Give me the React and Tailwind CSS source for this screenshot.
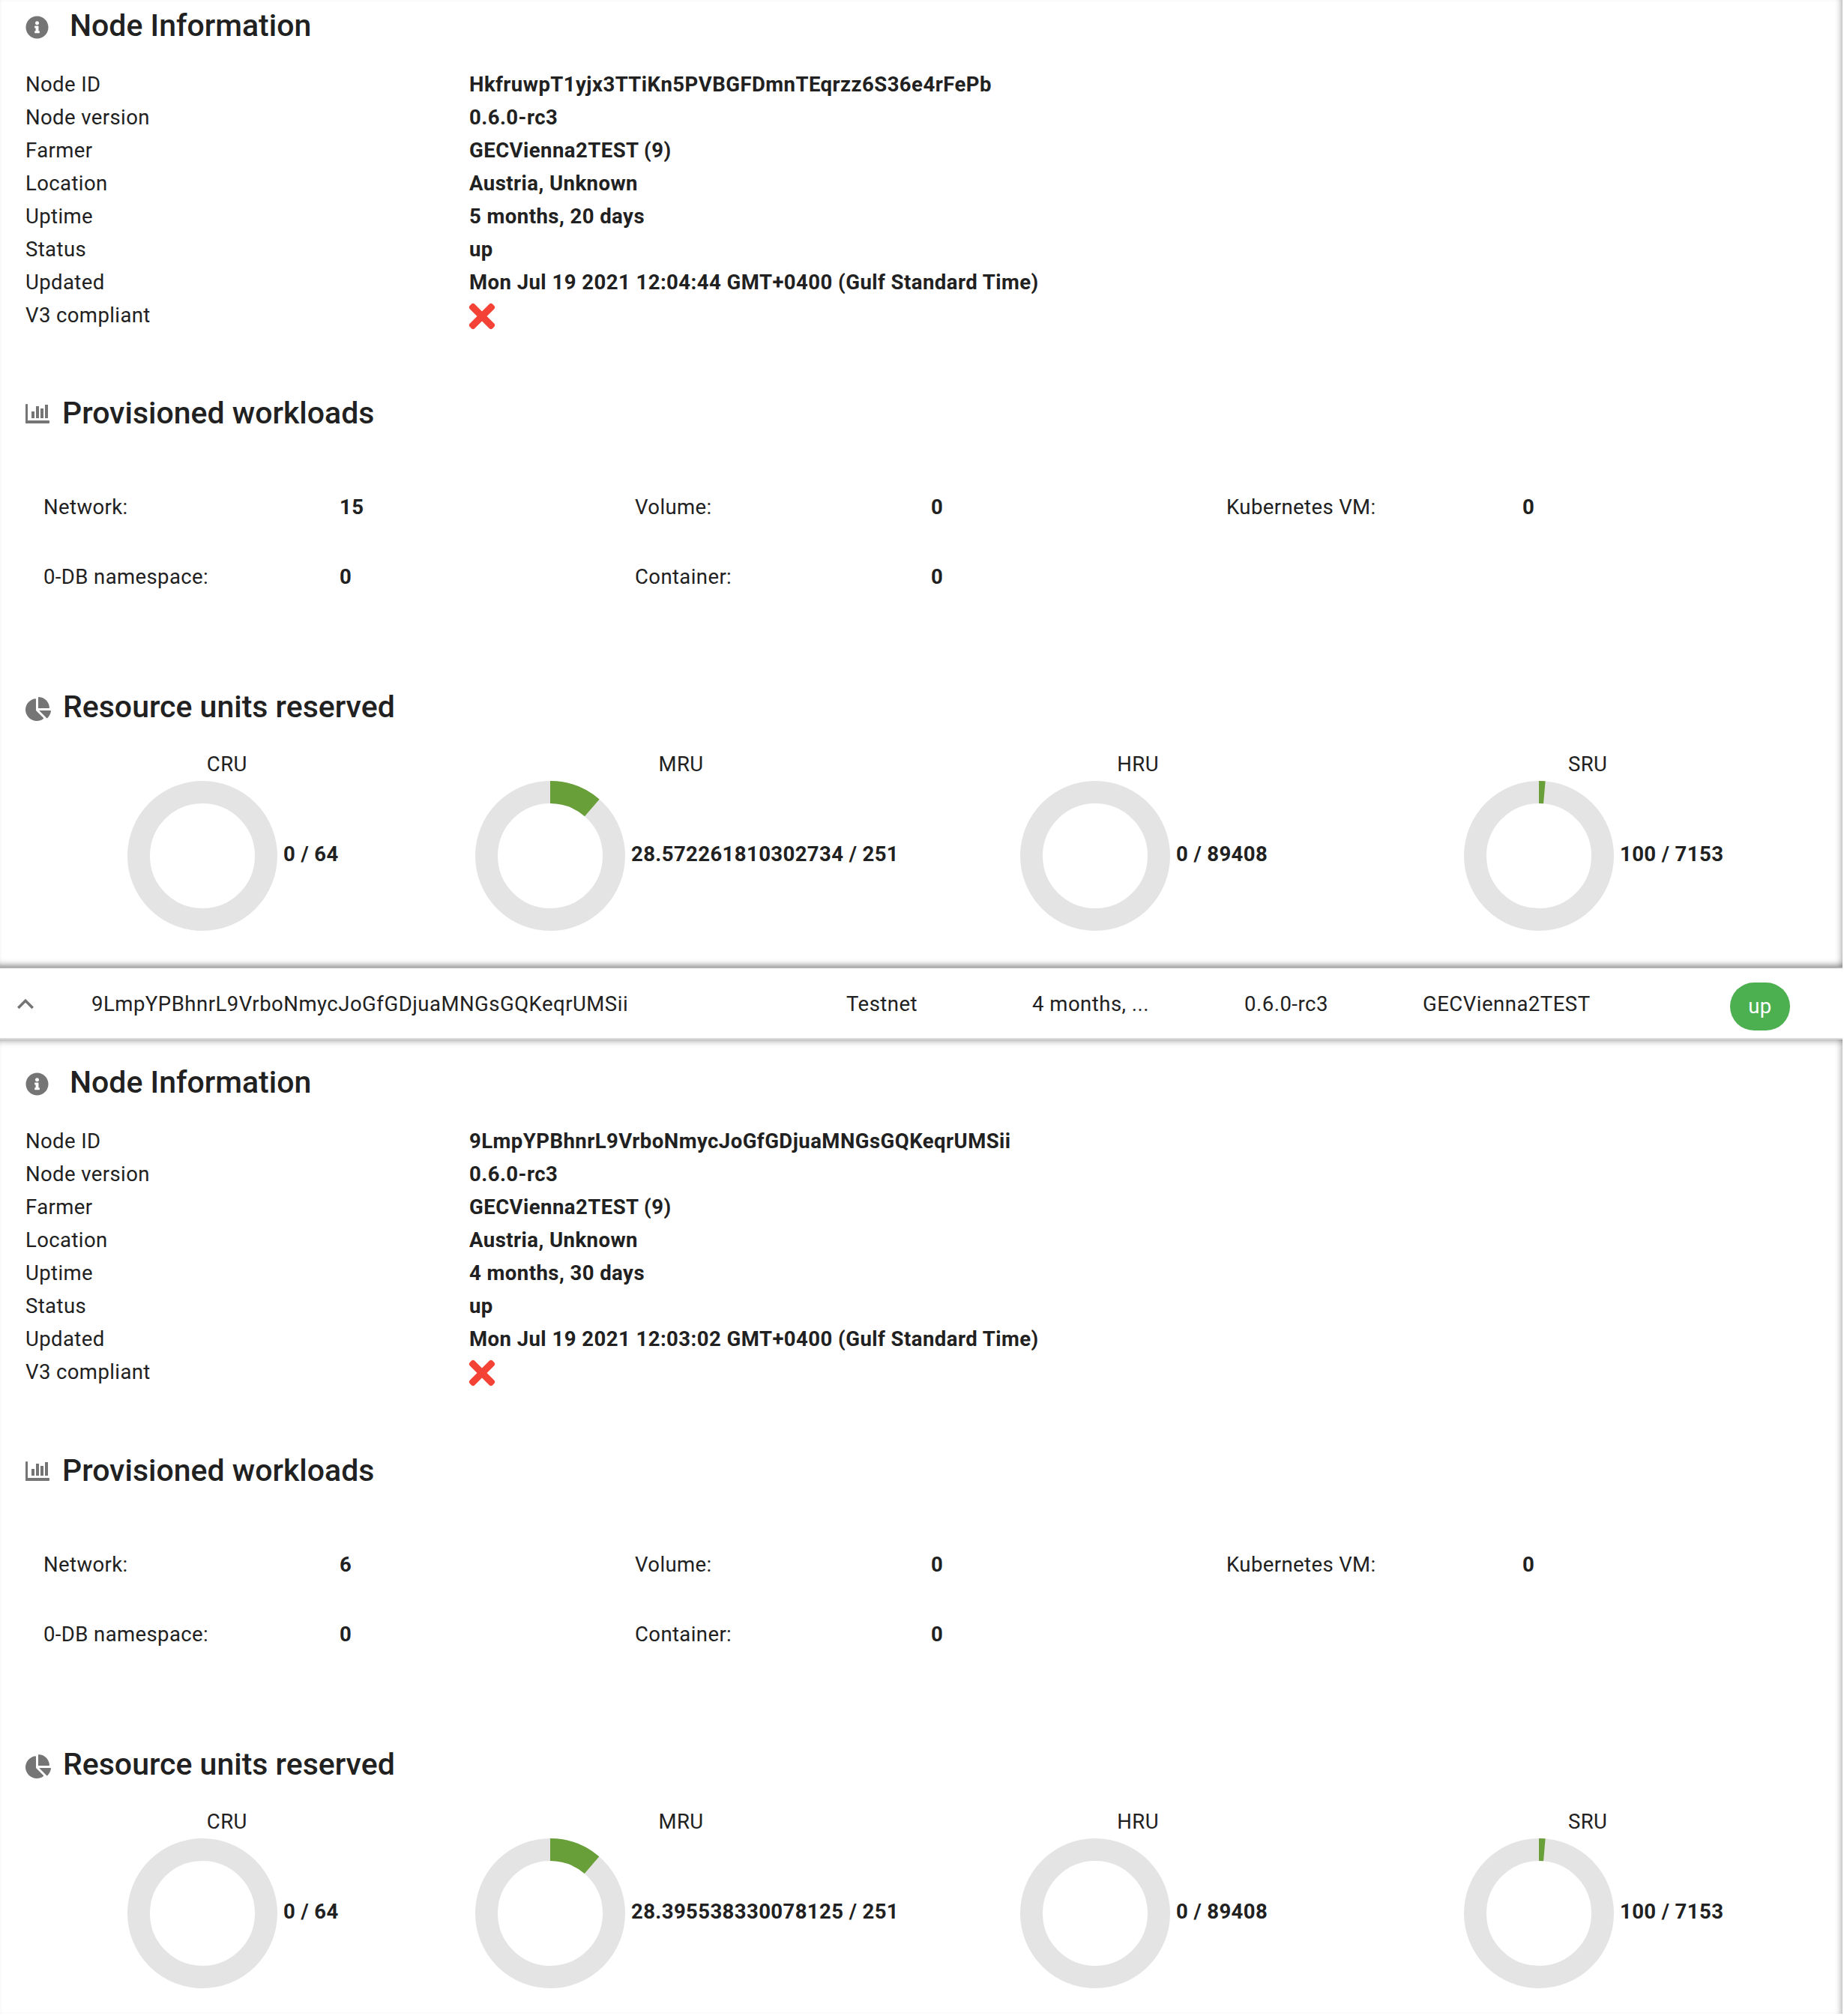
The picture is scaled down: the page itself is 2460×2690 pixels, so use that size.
import React from "react";
import { FaInfoCircle, FaChartPie, FaTimes } from "react-icons/fa";
import { MdKeyboardArrowUp } from "react-icons/md";

// Small bar chart icon, the icon pack version has heavier bars than the screenshot
const BarsIcon = () => (
  <svg width="32" height="26" viewBox="0 0 32 26" fill="#757575">
    <rect x="0" y="0" width="3" height="26" rx="1" />
    <rect x="0" y="22" width="32" height="4" rx="1" />
    <rect x="8" y="10" width="4" height="9" />
    <rect x="14" y="3" width="4" height="16" />
    <rect x="20" y="6" width="4" height="13" />
    <rect x="26" y="1" width="4" height="18" />
  </svg>
);

const Donut = ({ used, total }) => {
  const radius = 85;
  const circumference = 2 * Math.PI * radius;
  const arc = (used / total) * circumference;
  return (
    <svg width="200" height="200" viewBox="0 0 200 200" className="shrink-0">
      <circle cx="100" cy="100" r={radius} fill="none" stroke="#e4e4e4" strokeWidth="30" />
      {used > 0 && (
        <circle
          cx="100"
          cy="100"
          r={radius}
          fill="none"
          stroke="#689f38"
          strokeWidth="30"
          strokeDasharray={`${arc} ${circumference}`}
          transform="rotate(-90 100 100)"
        />
      )}
    </svg>
  );
};

const Heading = ({ icon, gap, children }) => (
  <div className="flex items-center h-[64px] pl-[34px]">
    <div className={`flex items-center shrink-0 ${gap}`}>{icon}</div>
    <h2 className="text-[41px] font-medium text-[#212121]">{children}</h2>
  </div>
);

const Section = ({ node, className, workloadsGap }) => {
  const infoRows = [
    ["Node ID", node.id],
    ["Node version", "0.6.0-rc3"],
    ["Farmer", "GECVienna2TEST (9)"],
    ["Location", "Austria, Unknown"],
    ["Uptime", node.uptime],
    ["Status", "up"],
    ["Updated", node.updated],
  ];
  const workloads = [
    ["Network:", node.network],
    ["Volume:", 0],
    ["Kubernetes VM:", 0],
    ["0-DB namespace:", 0],
    ["Container:", 0],
  ];
  const resources = [
    { name: "CRU", used: 0, total: 64, label: "0 / 64" },
    { name: "MRU", used: node.mru, total: 251, label: `${node.mru} / 251` },
    { name: "HRU", used: 0, total: 89408, label: "0 / 89408" },
    { name: "SRU", used: 100, total: 7153, label: "100 / 7153" },
  ];

  return (
    <section className={className}>
      <Heading gap="w-[59px]" icon={<FaInfoCircle size={31} color="#757575" className="mt-[3px]" />}>
        Node Information
      </Heading>

      <div className="mt-[24px] pl-[34px] text-[27.5px] tracking-[0.4px] text-[#212121]">
        {infoRows.map(([label, value]) => (
          <div key={label} className="flex items-center h-[44px]">
            <span className="w-[592px] shrink-0">{label}</span>
            <span className="font-bold tracking-[0.46px]">{value}</span>
          </div>
        ))}
        <div className="flex items-center h-[44px]">
          <span className="w-[592px] shrink-0">V3 compliant</span>
          <FaTimes size={50} color="#f44336" className="-ml-[8px] mt-[1px]" />
        </div>
      </div>

      <div className={workloadsGap}>
        <Heading gap="w-[49px]" icon={<BarsIcon />}>
          Provisioned workloads
        </Heading>
      </div>

      <div className="mt-[46px] pl-[58px] grid grid-cols-[789px_789px_1fr] text-[27.5px] tracking-[0.4px] text-[#212121]">
        {workloads.map(([label, value]) => (
          <div key={label} className="flex items-center h-[93px]">
            <span className="w-[395px] shrink-0">{label}</span>
            <span className="font-bold">{value}</span>
          </div>
        ))}
      </div>

      <div className="mt-[96px]">
        <Heading gap="w-[50px]" icon={<FaChartPie size={34} color="#757575" className="mt-[3px]" />}>
          Resource units reserved
        </Heading>
      </div>

      <div className="mt-[22px] pl-[154px] grid grid-cols-[464px_727px_592px_1fr] text-[27.5px] tracking-[0.4px] text-[#212121]">
        {resources.map((res) => (
          <div key={res.name} className="w-fit flex flex-col items-center">
            <div className="h-[44px] flex items-center">{res.name}</div>
            <div className="flex items-center pl-[16px]">
              <Donut used={res.used} total={res.total} />
              <span className="ml-[8px] -mt-[4px] font-bold whitespace-nowrap">{res.label}</span>
            </div>
          </div>
        ))}
      </div>
    </section>
  );
};

const nodes = [
  {
    id: "HkfruwpT1yjx3TTiKn5PVBGFDmnTEqrzz6S36e4rFePb",
    uptime: "5 months, 20 days",
    updated: "Mon Jul 19 2021 12:04:44 GMT+0400 (Gulf Standard Time)",
    network: 15,
    mru: 28.572261810302734,
  },
  {
    id: "9LmpYPBhnrL9VrboNmycJoGfGDjuaMNGsGQKeqrUMSii",
    uptime: "4 months, 30 days",
    updated: "Mon Jul 19 2021 12:03:02 GMT+0400 (Gulf Standard Time)",
    network: 6,
    mru: 28.395538330078125,
  },
];

export default function App() {
  return (
    <div className="bg-white min-h-screen w-[2458px] font-['Roboto',sans-serif]">
      <Section
        node={nodes[0]}
        workloadsGap="mt-[77px]"
        className="pt-[3px] pb-[48px] shadow-[inset_-8px_0_8px_-6px_rgba(0,0,0,0.3),inset_0_-8px_8px_-6px_rgba(0,0,0,0.45)]"
      />

      {/* Expanded row header */}
      <div className="h-[97px] pt-[3px] border-t-2 border-t-[#b0b0b0] border-b-2 border-b-[#dcdcdc] bg-white grid grid-cols-[122px_1007px_248px_283px_238px_1fr] items-center text-[27.5px] tracking-[0.5px] text-[#212121]">
        <div className="flex justify-center w-[68px]">
          <MdKeyboardArrowUp size={44} color="#757575" />
        </div>
        <span>{nodes[1].id}</span>
        <span>Testnet</span>
        <span>4 months, ...</span>
        <span>0.6.0-rc3</span>
        <div className="flex items-center">
          <span className="w-[410px]">GECVienna2TEST</span>
          <span className="w-[80px] h-[64px] mt-[6px] rounded-full bg-[#4caf50] text-white flex items-center justify-center">up</span>
        </div>
      </div>

      <Section
        node={nodes[1]}
        workloadsGap="mt-[78px]"
        className="pt-[26px] pb-[34px] shadow-[inset_-8px_0_8px_-6px_rgba(0,0,0,0.3),inset_0_8px_8px_-6px_rgba(0,0,0,0.35)]"
      />
    </div>
  );
}
